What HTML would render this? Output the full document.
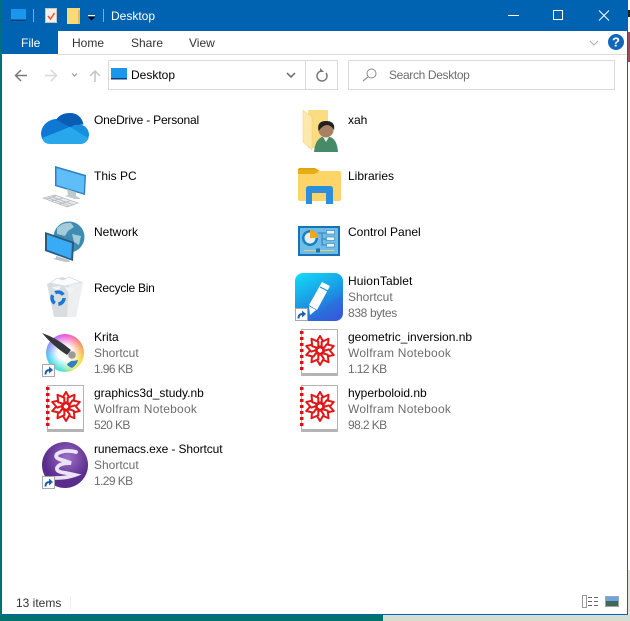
<!DOCTYPE html>
<html><head><meta charset="utf-8"><style>
html,body{margin:0;padding:0}
body{width:630px;height:621px;position:relative;overflow:hidden;background:#fff;font-family:"Liberation Sans",sans-serif;font-size:12px;color:#000}
.a{position:absolute;white-space:nowrap;line-height:16px}
.g{color:#6d6d6d}
svg{position:absolute;overflow:visible}
.r{position:absolute}
</style></head><body>
<div class="r" style="left:0;top:0;width:2px;height:621px;background:#00737a"></div>
<div class="r" style="left:0;top:615px;width:383px;height:6px;background:#00736f"></div>
<div class="r" style="left:383px;top:615px;width:247px;height:6px;background:#d5dcd0"></div>
<div class="r" style="left:628px;top:0;width:2px;height:615px;background:#fdfdfd"></div>
<div class="r" style="left:628px;top:10px;width:2px;height:7px;background:#222"></div>
<div class="r" style="left:628px;top:32px;width:2px;height:30px;background:#a34a5a"></div>
<div class="r" style="left:628px;top:570px;width:2px;height:45px;background:#dfe5dc"></div>
<div class="r" style="left:1px;top:0;width:1px;height:615px;background:#0063b1"></div>
<div class="r" style="left:2px;top:0;width:626px;height:614px;background:#fff"></div>
<div class="r" style="left:2px;top:0;width:626px;height:31px;background:#0063b1"></div>
<div class="r" style="left:1px;top:614px;width:627px;height:1px;background:#0063b1"></div>
<div class="r" style="left:627px;top:0;width:1px;height:615px;background:#0063b1"></div>
<div class="r" style="left:2px;top:31px;width:56px;height:23px;background:#0063b1"></div>
<div class="r" style="left:58px;top:54px;width:569px;height:1px;background:#dadada"></div>
<svg style="left:0;top:0" width="160" height="31">
<rect x="11" y="9" width="15" height="11" fill="#1a96ec"/><rect x="11" y="19.500" width="15" height="1.500" fill="#0b3d78"/>
<rect x="33" y="9" width="1" height="13" fill="#7fa9d0"/>
<rect x="45.500" y="8.500" width="11" height="14" fill="#f4f1ec" stroke="#c9c5bf"/><path d="M48 16l2.500 3 4-6" stroke="#e8562a" stroke-width="1.500" fill="none"/>
<rect x="67" y="8" width="13" height="16" fill="#fbd978"/><rect x="78" y="10" width="2" height="14" fill="#e6bb55"/>
<rect x="88" y="15" width="7" height="1" fill="#fff"/><path d="M88 17h7l-3.500 3.500z" fill="#000"/>
<rect x="103" y="9" width="1" height="13" fill="#7fa9d0"/>
</svg>
<div class="a" style="left:111px;top:8px;color:#fff">Desktop</div>
<svg style="left:500px;top:0" width="127" height="31" fill="none" stroke="#fff" stroke-width="1">
<path d="M8 15.500h11"/><rect x="53.500" y="10.500" width="9" height="9"/><path d="M99 10.500l10 10M109 10.500l-10 10"/>
</svg>
<div class="a" style="left:21px;top:35px;color:#fff">File</div>
<div class="a" style="left:72px;top:35px;color:#333">Home</div>
<div class="a" style="left:131px;top:35px;color:#333">Share</div>
<div class="a" style="left:189px;top:35px;color:#333">View</div>
<svg style="left:585px;top:33px" width="42" height="20">
<path d="M5 8l4 4 4-4" fill="none" stroke="#aaa"/><circle cx="31" cy="9" r="8" fill="#1268b8"/>
<text x="31" y="13.500" text-anchor="middle" fill="#fff" font-family="Liberation Sans" font-weight="bold" font-size="13">?</text>
</svg>
<svg style="left:0;top:55px" width="110" height="40" fill="none" stroke-width="1.500">
<path d="M16 20.500h11M21 15l-5.500 5.500 5.500 5.500" stroke="#7a7a7a"/>
<path d="M45 20.500h11M51 15l5.500 5.500-5.500 5.500" stroke="#d8d8d8"/>
<path d="M72 18.500l2.500 2.500 2.500-2.500" stroke="#9a9a9a" stroke-width="1.200"/>
<path d="M95 27v-11M90 21l5-5 5 5" stroke="#c4c4c4"/>
</svg>
<div class="r" style="left:108px;top:60px;width:228px;height:28px;border:1px solid #d9d9d9"></div>
<div class="r" style="left:305px;top:61px;width:1px;height:28px;background:#d9d9d9"></div>
<svg style="left:108px;top:60px" width="230" height="30">
<rect x="3" y="8" width="16" height="11" fill="#1a96ec"/><rect x="3" y="18" width="16" height="1.500" fill="#0b3d78"/>
<path d="M179 13l4 4 4-4" fill="none" stroke="#666" stroke-width="1.500"/>
<path d="M214 11a5 5 0 1 0 4 2" fill="none" stroke="#777" stroke-width="1.500"/><path d="M212 8v4h4z" fill="#777"/>
</svg>
<div class="a" style="left:131px;top:67px">Desktop</div>
<div class="r" style="left:348px;top:60px;width:265px;height:28px;border:1px solid #d9d9d9"></div>
<svg style="left:362px;top:67px" width="16" height="16" fill="none"><circle cx="9.500" cy="6.500" r="4.500" stroke="#888"/><path d="M6 10l-5 4" stroke="#a08a90" stroke-width="1.200"/></svg>
<div class="a" style="left:389px;top:67px;color:#6d6d6d;letter-spacing:-.35px">Search Desktop</div>

<svg style="left:41px;top:113px" width="48" height="31">
<path d="M0 21C0 13 7 6 16 6c4 0 8 2 11 4l2 4L1 26z" fill="#0f78d4"/>
<path d="M27 14l7-2c8-2 14 3 14 10l-1 5z" fill="#1490df"/>
<path d="M15 7C18 2 23 0 29 0c7 0 12 4 13.500 11.500L34 12l-5 2-8-4c-1-1-3-2.500-6-3z" fill="#0a5db4"/>
<path d="M1 25l28-11 18 11c0 3.500-4 6-7 6H9c-4 0-7-2-8-6z" fill="#28a8ea"/>
</svg>
<svg style="left:43px;top:165px" width="46" height="43">
<path d="M12 1l31 9-1 20-30-9z" fill="#2f7fc4"/><path d="M13.500 3l28 8.200-.8 17-27.200-8.200z" fill="#5fbdf8"/>
<path d="M24 24l9 3v4l4 2v1l-5 0-10-3 3-1z" fill="#c2c9cc"/>
<path d="M0 33l12-3 23 8-11 4z" fill="#e6e8ea" stroke="#a9adb2" stroke-width=".6"/>
<path d="M5 33l22 8M9 32l22 8M13 31l-10 3M20 33l-11 3M27 36l-11 3" stroke="#b5b9bd" stroke-width=".7"/>
</svg>
<svg style="left:44px;top:221px" width="46" height="44">
<circle cx="25" cy="16" r="15.500" fill="#3f8bb2"/><path d="M13 7q6-6 14-5l3 4-6 4-3 5-8-2zM28 13l9 2-2 9-5-3z" fill="#a3cbd9"/>
<path d="M1 11l29 10-1 19L1 30z" fill="#2c5a7c"/><path d="M3 13.500l25 8.700-.8 15.500L3 28.800z" fill="#38aaf6"/>
<path d="M12 35l13 4 1 2-4 0-13-3 3-1z" fill="#bdc4c7"/>
</svg>
<svg style="left:47px;top:275px" width="36" height="43">
<path d="M0 9l15-7 21 5-7 35-22 0z" fill="#d9dde0"/><path d="M22 8l14-1-7 35h-9z" fill="#eceeef"/>
<path d="M3 8l7-5 6 2 6-3 7 3 5 2-16 4z" fill="#fbfbfb" stroke="#d0d4d6" stroke-width=".6"/>
<path d="M5 12l9-1-3 6zM18 12l9 1-4 7z" fill="#f2f3f4"/>
<circle cx="11" cy="23" r="6" fill="none" stroke="#1a77d2" stroke-width="3.500" stroke-dasharray="9 3.600"/>
</svg>

<div class="r" style="left:46px;top:334px;width:38px;height:38px;border-radius:50%;background:radial-gradient(circle,#fff 0 25%,rgba(255,255,255,0) 68%),conic-gradient(#ef4fdc 0deg,#f79060 60deg,#f5d840 110deg,#e0f070 150deg,#40e0d8 195deg,#40d0f0 250deg,#9090f8 300deg,#ef4fdc 360deg)"></div>
<svg style="left:43px;top:333px" width="45" height="44">
<path d="M28 28q3 0 7-1-1 5-6 8-5-2-5-4z" fill="#347fc0"/>
<path d="M-1 0Q14 5 28 17l-4 5Q10 13-1 0z" fill="#34383b"/><circle cx="29" cy="22" r="3.800" fill="#9a9a9a"/>
</svg>
<svg style="left:42px;top:442px" width="46" height="46">
<defs><radialGradient id="e" cx=".55" cy=".35"><stop offset="0" stop-color="#9d70c8"/><stop offset="1" stop-color="#5a2c8c"/></radialGradient></defs>
<circle cx="23" cy="23" r="23" fill="url(#e)"/>
<path d="M34 10Q22 7 15 12q-3 4 5 6l9 3q-12 0-14 5-1 4 9 5l9 2q-8 3-19 3" fill="none" stroke="#ece4f2" stroke-width="3.800" stroke-linecap="round"/>
</svg>

<svg style="left:0;top:0;pointer-events:none" width="630" height="621">
<defs>
<g id="p"><path d="M0-14.500L3.800-8 0-3-3.800-8Z" fill="#fff" stroke="#e01818" stroke-width="2" stroke-linejoin="round"/></g>
<g id="st"><use href="#p"/><use href="#p" transform="rotate(36)"/><use href="#p" transform="rotate(72)"/><use href="#p" transform="rotate(108)"/><use href="#p" transform="rotate(144)"/><use href="#p" transform="rotate(180)"/><use href="#p" transform="rotate(216)"/><use href="#p" transform="rotate(252)"/><use href="#p" transform="rotate(288)"/><use href="#p" transform="rotate(324)"/></g>
<g id="nb">
<rect x="1" y="0" width="37" height="47" fill="#b4b4b4"/><rect x="2" y="1" width="35" height="43" fill="#fff"/>
<path d="M0 3.500h3.500M0 9.500h3.500M0 15.500h3.500M0 21.500h3.500M0 27.500h3.500M0 33.500h3.500M0 39.500h3.500" stroke="#e01010" stroke-width="3"/>
<use href="#st" x="20" y="21.500"/>
</g></defs>
<use href="#nb" x="46" y="385"/><use href="#nb" x="300" y="329"/><use href="#nb" x="300" y="385"/>
</svg>

<svg style="left:302px;top:109px" width="36" height="44">
<path d="M6 1h20v38H6z" fill="#fbdc82"/><path d="M1 1l9 7v33L1 33z" fill="#fde9ac" stroke="#eacb72" stroke-width=".5"/>
<path d="M12 43q1-12 8-15h8q7 2 8 15z" fill="#478a68"/><path d="M21 28l3 5 3-5z" fill="#eef2ec"/>
<circle cx="24" cy="21" r="7.500" fill="#a98162"/><path d="M16.500 22q-2-10 7.500-10t8 9q-3-5-7-5t-8.500 6z" fill="#20201e"/>
</svg>
<svg style="left:297px;top:167px" width="46" height="38">
<path d="M1 3q0-2 2-2h15l5 3h19q2 0 2 3v5H1z" fill="#dfa50e"/>
<rect x="1" y="4" width="43" height="30" rx="2" fill="#fdd468"/><path d="M1 3h17l4 2-5 2H1z" fill="#e7ad12"/>
<path d="M9 37V22q0-3 3-3h21q3 0 3 3v15h-7V26H15v11z" fill="#2d8fdc"/>
</svg>
<svg style="left:298px;top:226px" width="42" height="30">
<rect width="42" height="30" fill="#1773b8"/><rect x="2" y="2" width="38" height="26" fill="#6fbde6"/>
<circle cx="12" cy="12" r="8" fill="#1880c4"/><circle cx="12" cy="12" r="5.500" fill="#e6eef2"/><path d="M12 4a8 8 0 0 1 8 8h-8z" fill="#f2a81c"/>
<path d="M20 7h9M24 7v6h5M24 13v6h5" stroke="#1a6fb6" fill="none" stroke-width=".8"/>
<rect x="28.500" y="4.500" width="8" height="3.500" fill="#eaf4fa" stroke="#2c83bc" stroke-width=".6"/><rect x="28.500" y="11" width="8" height="3.500" fill="#eaf4fa" stroke="#2c83bc" stroke-width=".6"/><rect x="28.500" y="17.500" width="8" height="3.500" fill="#eaf4fa" stroke="#2c83bc" stroke-width=".6"/>
<path d="M6 24.500h30" stroke="#e8d070"/><rect x="18" y="22.500" width="4" height="4" fill="#1a6fb6"/>
</svg>
<svg style="left:295px;top:273px" width="50" height="50">
<defs><linearGradient id="h" x1=".2" y1="0" x2=".7" y2="1"><stop offset="0" stop-color="#13d5f6"/><stop offset=".55" stop-color="#1b95e2"/><stop offset="1" stop-color="#3a4ed8"/></linearGradient></defs>
<rect x="0" y="0" width="48" height="48" rx="8" fill="url(#h)"/>
<path d="M48 24Q34 26 20 48h20q8 0 8-8z" fill="#2b6fdc" opacity=".45"/>
<path d="M27 9l8 4-13 24-8-5z" fill="#fff"/><path d="M14 33l7 4-6 5z" fill="#fff"/><path d="M25 14l8 4" stroke="#1b95e2" stroke-width="1.200"/>
</svg>
<svg style="left:42px;top:364px" width="13" height="13"><rect x=".5" y=".5" width="12" height="12" fill="#fff" stroke="#a9a9a9"/><path d="M3.500 10.500q0-4.500 4-4.500" fill="none" stroke="#1f5fae" stroke-width="2"/><path d="M7 2.500l4 3.500-4 3.500z" fill="#1f5fae"/></svg>
<svg style="left:42px;top:476px" width="13" height="13"><rect x=".5" y=".5" width="12" height="12" fill="#fff" stroke="#a9a9a9"/><path d="M3.500 10.500q0-4.500 4-4.500" fill="none" stroke="#1f5fae" stroke-width="2"/><path d="M7 2.500l4 3.500-4 3.500z" fill="#1f5fae"/></svg>
<svg style="left:295px;top:308px" width="13" height="13"><rect x=".5" y=".5" width="12" height="12" fill="#fff" stroke="#a9a9a9"/><path d="M3.500 10.500q0-4.500 4-4.500" fill="none" stroke="#1f5fae" stroke-width="2"/><path d="M7 2.500l4 3.500-4 3.500z" fill="#1f5fae"/></svg>

<div class="a" style="left:94px;top:112px;letter-spacing:-.2px">OneDrive - Personal</div>
<div class="a" style="left:94px;top:168px">This PC</div>
<div class="a" style="left:94px;top:224px">Network</div>
<div class="a" style="left:94px;top:280px;letter-spacing:-.25px">Recycle Bin</div>
<div class="a" style="left:94px;top:329px">Krita</div>
<div class="a g" style="left:94px;top:345px">Shortcut</div>
<div class="a g" style="left:94px;top:361px;letter-spacing:-.6px">1.96 KB</div>
<div class="a" style="left:94px;top:385px">graphics3d_study.nb</div>
<div class="a g" style="left:94px;top:401px;letter-spacing:.25px">Wolfram Notebook</div>
<div class="a g" style="left:94px;top:417px;letter-spacing:-.6px">520 KB</div>
<div class="a" style="left:94px;top:441px;letter-spacing:-.1px">runemacs.exe - Shortcut</div>
<div class="a g" style="left:94px;top:457px">Shortcut</div>
<div class="a g" style="left:94px;top:473px;letter-spacing:-.6px">1.29 KB</div>
<div class="a" style="left:348px;top:112px">xah</div>
<div class="a" style="left:348px;top:168px">Libraries</div>
<div class="a" style="left:348px;top:224px">Control Panel</div>
<div class="a" style="left:348px;top:273px;letter-spacing:.1px">HuionTablet</div>
<div class="a g" style="left:348px;top:289px">Shortcut</div>
<div class="a g" style="left:348px;top:305px;letter-spacing:-.35px">838 bytes</div>
<div class="a" style="left:348px;top:329px">geometric_inversion.nb</div>
<div class="a g" style="left:348px;top:345px;letter-spacing:.25px">Wolfram Notebook</div>
<div class="a g" style="left:348px;top:361px;letter-spacing:-.6px">1.12 KB</div>
<div class="a" style="left:348px;top:385px">hyperboloid.nb</div>
<div class="a g" style="left:348px;top:401px;letter-spacing:.25px">Wolfram Notebook</div>
<div class="a g" style="left:348px;top:417px;letter-spacing:-.6px">98.2 KB</div>
<div class="a" style="left:16px;top:595px;color:#333">13 items</div>
<div class="r" style="left:70px;top:596px;width:1px;height:14px;background:#eee"></div>
<svg style="left:580px;top:594px" width="45" height="16">
<rect x="2.500" y="1.500" width="4" height="12" fill="none" stroke="#999"/><path d="M8 3.500h4M14 3.500h4M8 7.500h4M14 7.500h4M8 11.500h4M14 11.500h4" stroke="#666"/>
<rect x="25.500" y="2.500" width="13" height="10" fill="#6aa5e8" stroke="#a5a5a5"/><rect x="26" y="7" width="12" height="5" fill="#3f6a55"/>
</svg>
</body></html>
